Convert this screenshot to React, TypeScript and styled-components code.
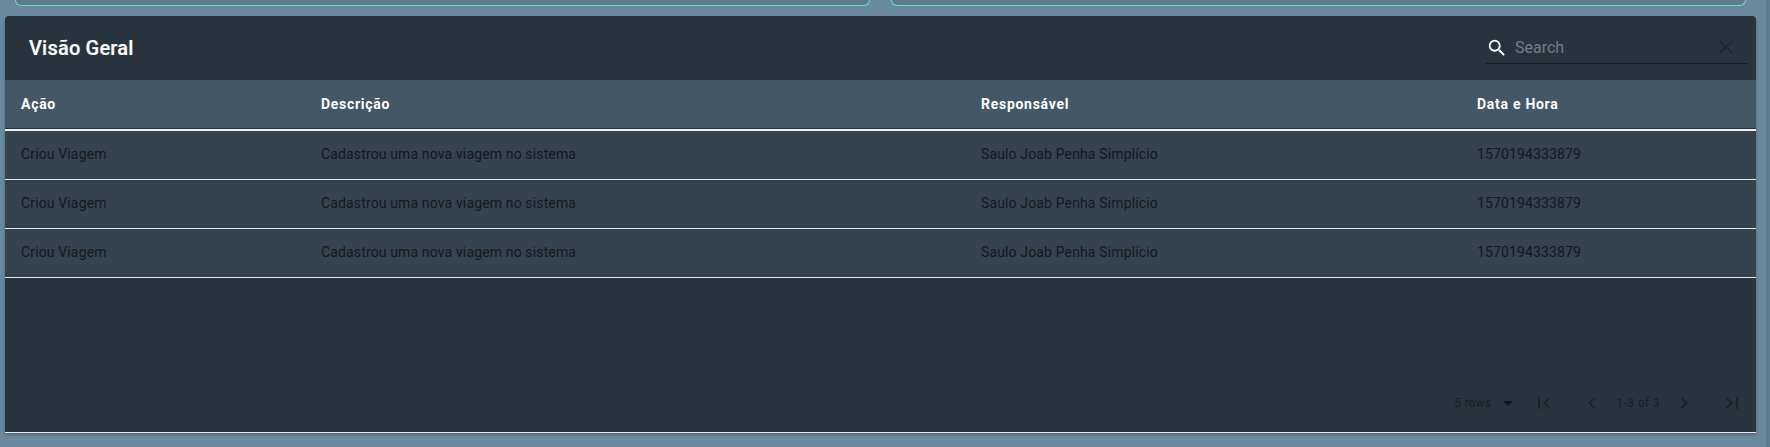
import { createGlobalStyle } from 'styled-components'
import styled from 'styled-components'
import { MdChevronLeft, MdChevronRight, MdClear, MdFirstPage, MdLastPage, MdSearch, MdArrowDropDown } from 'react-icons/md'

const GlobalStyle = createGlobalStyle`
  html, body {
    margin: 0;
    padding: 0;
    height: 100%;
    overflow: hidden;
    background: #6a889e;
    font-family: Roboto, 'Liberation Sans', sans-serif;
  }
`

const Page = styled.div`
  width: 1770px;
  height: 447px;
  box-sizing: border-box;
  padding: 0 14px 0 5px;
  position: relative;
  overflow: hidden;
`

const ScrollEdge = styled.div`
  position: absolute;
  top: 0;
  right: 0;
  bottom: 0;
  width: 4px;
  background: #5f7b90;
`

const TopRow = styled.div`
  height: 6px;
  display: flex;
  gap: 21px;
  padding: 0 10px 0 10px;
`

const TopCard = styled.div`
  flex: 1;
  height: 6px;
  box-sizing: border-box;
  background: #5d7a90;
  border: 1px solid #72dcae;
  border-top: none;
  border-radius: 0 0 12px 12px;
`

const Paper = styled.div`
  margin-top: 10px;
  height: 417px;
  box-sizing: border-box;
  background: #28343d;
  border-radius: 4px 4px 0 0;
  border-bottom: 1px solid #e8e8e8;
  box-shadow: 0 2px 3px rgba(0, 0, 0, 0.25);
  display: flex;
  flex-direction: column;
`

const Toolbar = styled.div`
  height: 64px;
  flex: none;
  display: flex;
  align-items: center;
  justify-content: space-between;
  padding: 0 8px 0 24px;
`

const Title = styled.h2`
  margin: 0 0 1px;
  font-size: 20px;
  font-weight: 500;
  color: #fff;
  letter-spacing: 0.2px;
  -webkit-text-stroke: 0.2px #fff;
`

const SearchBox = styled.div`
  width: 262px;
  height: 32px;
  box-sizing: border-box;
  border-bottom: 1px solid #161c22;
  display: flex;
  align-items: center;
`

const SearchIcon = styled(MdSearch)`
  font-size: 22px;
  color: #fff;
  flex: none;
`

const Placeholder = styled.span`
  flex: 1;
  margin-left: 7px;
  font-size: 16px;
  color: #757d84;
`

const ClearIcon = styled(MdClear)`
  font-size: 22px;
  color: #1f282f;
  margin: 0 11px 1px 0;
`

const Table = styled.table`
  width: 100%;
  table-layout: fixed;
  border-collapse: separate;
  border-spacing: 0;
  flex: none;
`

const HeadCell = styled.th`
  height: 47px;
  padding: 0 16px 2px;
  box-sizing: content-box;
  text-align: left;
  font-size: 14px;
  font-weight: 700;
  letter-spacing: 0.72px;
  color: #fff;
  background: #425867;
  border-bottom: 2px solid #f2f2f2;
  box-shadow: inset 0 -1px 0 #25303a;
`

const Row = styled.tr`
  background: #33434f;
`

const Cell = styled.td`
  height: 46px;
  padding: 0 16px 2px;
  font-size: 14px;
  font-weight: 400;
  letter-spacing: 0.14px;
  color: #14191e;
  border-bottom: 1px solid #e6e8ea;
`

const Footer = styled.div`
  margin-top: auto;
  height: 60px;
  display: flex;
  align-items: center;
  justify-content: flex-end;
  padding: 2px 12px 0 0;
  box-sizing: border-box;
  color: #161c22;
  font-size: 12px;
`

const RowsSelect = styled.div`
  display: flex;
  align-items: center;
  width: 66px;
  color: #171d23;
  letter-spacing: 0.2px;
`

const DropIcon = styled(MdArrowDropDown)`
  font-size: 24px;
  margin-left: auto;
  color: #11161a;
`

const PageButton = styled.span<{ $gap?: number }>`
  display: flex;
  font-size: 24px;
  color: #1b2329;
  margin-left: ${(p) => p.$gap ?? 0}px;
`

const PageLabel = styled.span`
  margin: 0 12px 0 12px;
  color: #171d23;
  font-size: 12px;
  letter-spacing: 0.4px;
`

const columns = [
  { title: 'Ação', width: 300 },
  { title: 'Descrição', width: 660 },
  { title: 'Responsável', width: 496 },
  { title: 'Data e Hora', width: 295 },
]

const rows = [1, 2, 3].map((id) => ({
  id,
  action: 'Criou Viagem',
  description: 'Cadastrou uma nova viagem no sistema',
  user: 'Saulo Joab Penha Simplício',
  date: '1570194333879',
}))

const App = () => {
  return (
    <Page>
      <GlobalStyle />
      <TopRow>
        <TopCard />
        <TopCard />
      </TopRow>
      <Paper>
        <Toolbar>
          <Title>Visão Geral</Title>
          <SearchBox>
            <SearchIcon />
            <Placeholder>Search</Placeholder>
            <ClearIcon />
          </SearchBox>
        </Toolbar>
        <Table>
          <colgroup>
            {columns.map((col) => (
              <col key={col.title} style={{ width: col.width }} />
            ))}
          </colgroup>
          <thead>
            <tr>
              {columns.map((col) => (
                <HeadCell key={col.title}>{col.title}</HeadCell>
              ))}
            </tr>
          </thead>
          <tbody>
            {rows.map((row) => (
              <Row key={row.id}>
                <Cell>{row.action}</Cell>
                <Cell>{row.description}</Cell>
                <Cell>{row.user}</Cell>
                <Cell>{row.date}</Cell>
              </Row>
            ))}
          </tbody>
        </Table>
        <Footer>
          <RowsSelect>
            5 rows
            <DropIcon />
          </RowsSelect>
          <PageButton $gap={12}>
            <MdFirstPage />
          </PageButton>
          <PageButton $gap={24}>
            <MdChevronLeft />
          </PageButton>
          <PageLabel>1-3 of 3</PageLabel>
          <PageButton>
            <MdChevronRight />
          </PageButton>
          <PageButton $gap={24}>
            <MdLastPage />
          </PageButton>
        </Footer>
      </Paper>
      <ScrollEdge />
    </Page>
  )
}

export default App
